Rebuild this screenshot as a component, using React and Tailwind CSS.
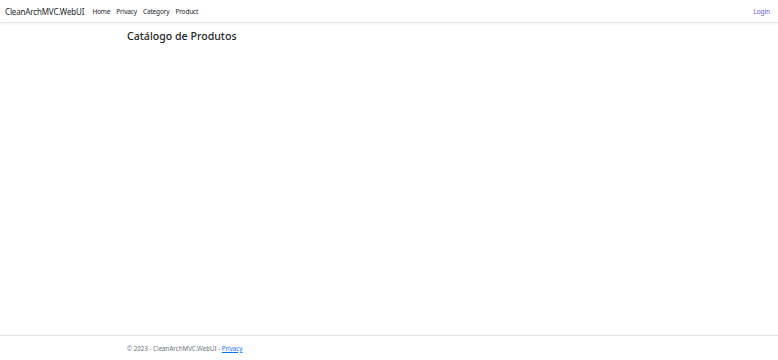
import React from 'react';

const App = () => {
  const links = ['Home', 'Privacy', 'Category', 'Product'];

  return (
    <div className="h-[360px] flex flex-col bg-white text-[#212529]" style={{ fontFamily: '"Noto Sans", "Open Sans", sans-serif' }}>
      {/* Navbar */}
      <nav className="h-[23px] flex items-center justify-between pl-[5px] pr-[8px] pt-[2px] border-b border-[#e5e5e5] shadow-[0_1px_3px_rgba(0,0,0,0.05)]">
        <div className="flex items-center">
          <span className="text-[8px] tracking-[-0.15px] text-[#212529] mr-[5px]">CleanArchMVC.WebUI</span>
          {links.map(item => (
            <a key={item} className="text-[6.5px] tracking-[-0.15px] text-[#212529] px-[3px]">{item}</a>
          ))}
        </div>
        <a className="text-[6.5px] tracking-[-0.1px] text-[#6a55d0]">Login</a>
      </nav>

      {/* Main */}
      <main className="flex-1 pl-[127px] pt-[6px]">
        <h1 className="text-[10.6px] font-medium text-[#212529]">Catálogo de Produtos</h1>
      </main>

      {/* Footer */}
      <footer className="h-[25px] border-t border-[#dee2e6] flex items-center pl-[127px] pt-[1px]">
        <span className="text-[6.2px] text-[#6c757d]">
          © 2023 - CleanArchMVC.WebUI - <a className="text-[#0d6efd] underline">Privacy</a>
        </span>
      </footer>
    </div>
  );
};

export default App;
